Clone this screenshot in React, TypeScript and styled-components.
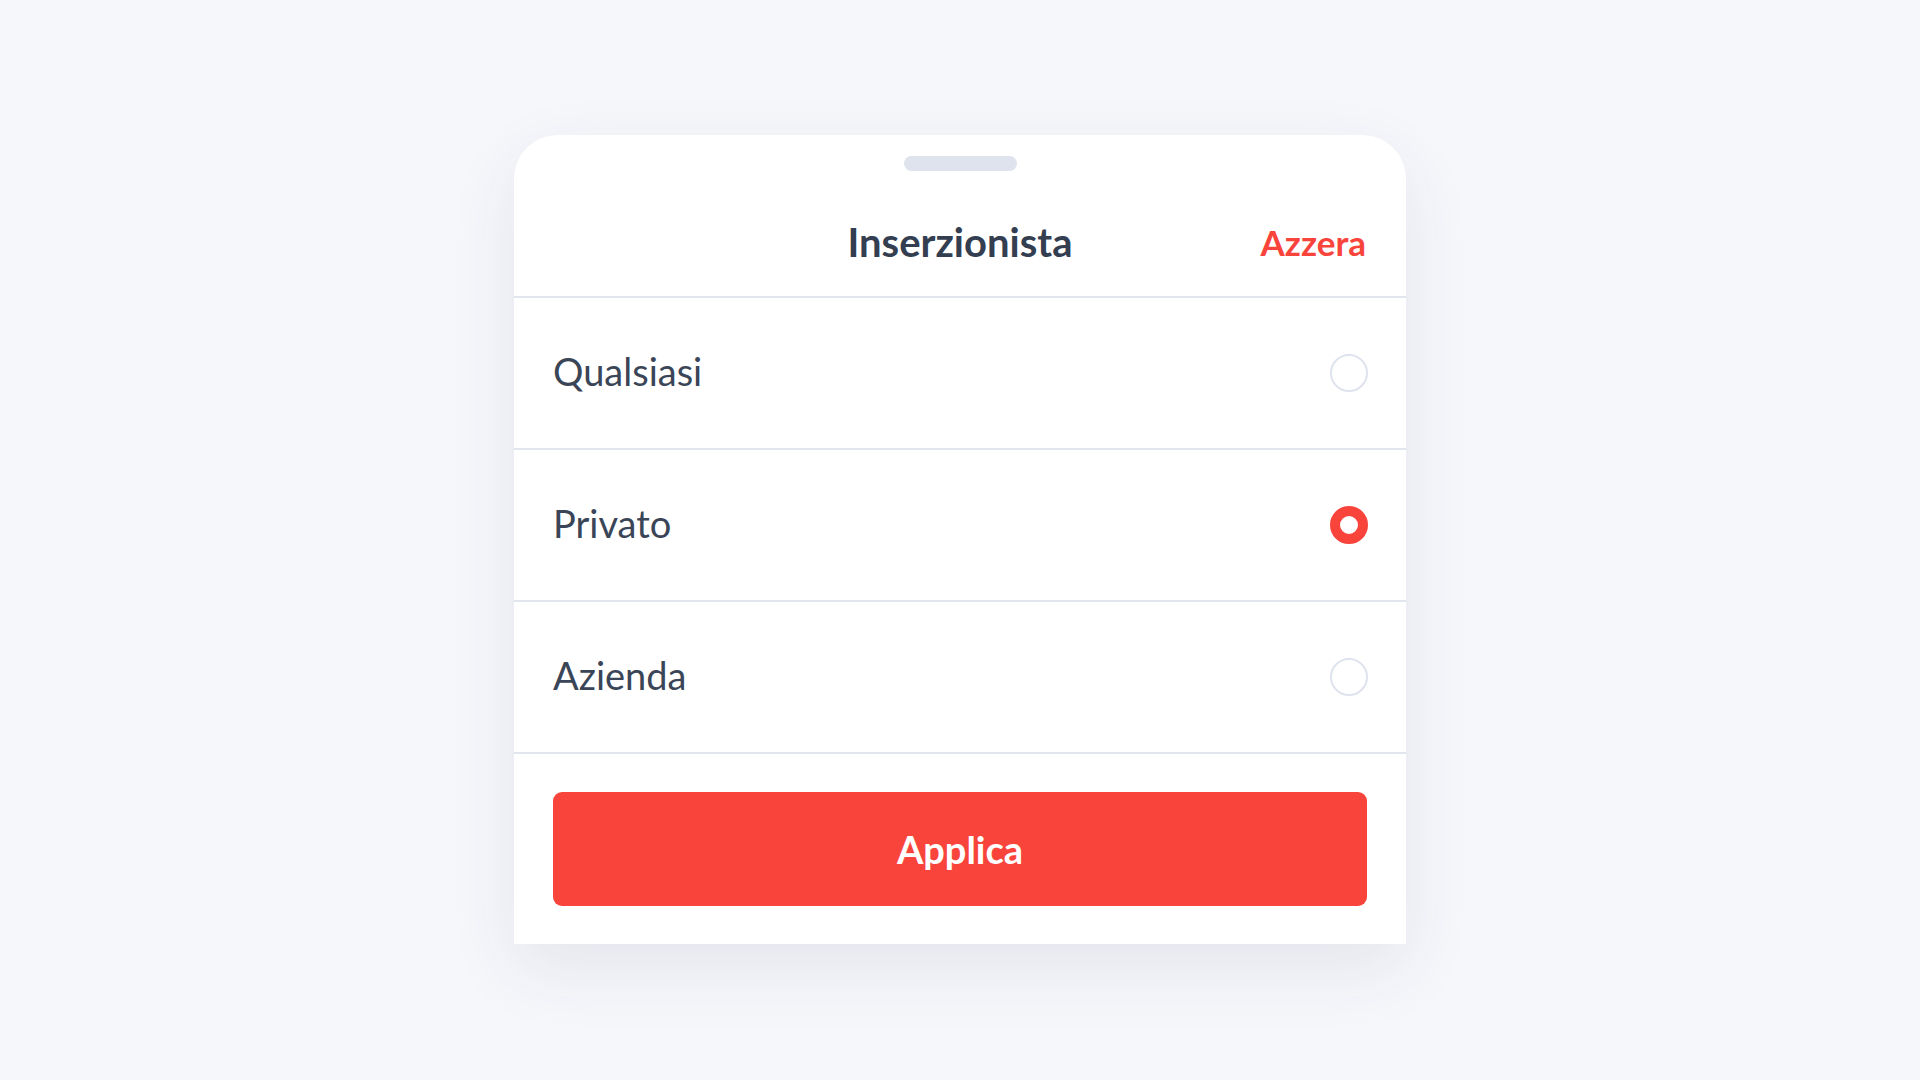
import { useState } from 'react'
import styled, { createGlobalStyle } from 'styled-components'

const GlobalStyle = createGlobalStyle`
  html, body {
    margin: 0;
    padding: 0;
    background: #f6f7fb;
    font-family: Lato, "Open Sans", sans-serif;
  }
`

const options = ['Qualsiasi', 'Privato', 'Azienda']

export default function App() {
  const [selected, setSelected] = useState('Privato')

  return (
    <Page>
      <GlobalStyle />
      <Sheet>
        <Header>
          <Handle />
          <TitleRow>
            <span />
            <Title>Inserzionista</Title>
            <ResetButton onClick={() => setSelected('Qualsiasi')}>Azzera</ResetButton>
          </TitleRow>
        </Header>

        {options.map(opt => (
          <OptionRow key={opt} onClick={() => setSelected(opt)}>
            <OptionLabel>{opt}</OptionLabel>
            <Radio $checked={selected === opt} />
          </OptionRow>
        ))}

        <Footer>
          <ApplyButton>Applica</ApplyButton>
        </Footer>
      </Sheet>
    </Page>
  )
}

const Page = styled.div`
  min-height: 100vh;
  display: flex;
  align-items: center;
  justify-content: center;
  box-sizing: border-box;
  padding-bottom: 2px;
`

const Sheet = styled.div`
  width: 892px;
  background: #ffffff;
  border-radius: 44px 44px 0 0;
  box-shadow: 0 24px 70px rgba(40, 52, 90, 0.09);
  display: flex;
  flex-direction: column;
`

const Header = styled.div`
  display: flex;
  flex-direction: column;
  align-items: center;
  padding: 21px 0 30px;
  border-bottom: 2px solid #e3e6ef;
`

const Handle = styled.div`
  width: 113px;
  height: 15px;
  border-radius: 8px;
  background: #dfe3ed;
`

const TitleRow = styled.div`
  align-self: stretch;
  display: grid;
  grid-template-columns: 1fr auto 1fr;
  align-items: center;
  padding: 47px 40px 0;
  line-height: 48px;
`

const Title = styled.h1`
  margin: 0;
  font-size: 40px;
  font-weight: 700;
  color: #333e50;
  line-height: 48px;
`

const ResetButton = styled.button`
  justify-self: end;
  border: none;
  background: none;
  padding: 0;
  font-family: inherit;
  font-size: 35px;
  font-weight: 700;
  color: #f9443c;
  cursor: pointer;
  line-height: 48px;
`

const OptionRow = styled.div`
  height: 146px;
  display: flex;
  align-items: center;
  justify-content: space-between;
  padding: 0 38px 4px 39px;
  border-bottom: 2px solid #e3e6ef;
  cursor: pointer;
`

const OptionLabel = styled.span`
  font-size: 38px;
  font-weight: 400;
  color: #3a4557;
`

const Radio = styled.span<{ $checked: boolean }>`
  width: 38px;
  height: 38px;
  box-sizing: border-box;
  border-radius: 50%;
  background: #ffffff;
  margin-top: 4px;
  border: ${p => (p.$checked ? '10px solid #f9443c' : '2.5px solid #dfe3ee')};
`

const Footer = styled.div`
  padding: 38px 39px;
`

const ApplyButton = styled.button`
  width: 100%;
  height: 114px;
  border: none;
  border-radius: 9px;
  background: #f9443c;
  color: #ffffff;
  font-family: inherit;
  font-size: 38px;
  font-weight: 700;
  cursor: pointer;
`
